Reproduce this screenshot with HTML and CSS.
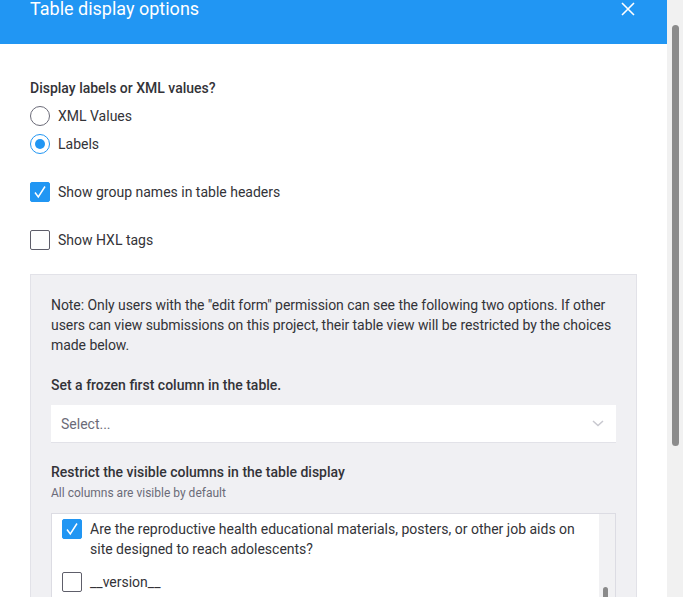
FILE: index.html
```html
<!DOCTYPE html>
<html lang="en">
<head>
<meta charset="utf-8">
<title>Table display options</title>
<link rel="stylesheet" href="styles.css">
</head>
<body>
<div class="page">
  <div class="modal">
    <header class="modal-header">
      <h1 class="modal-title">Table display options</h1>
      <button class="close" aria-label="Close">
        <svg width="14" height="14" viewBox="0 0 14 14"><path d="M1 1L13 13M13 1L1 13" stroke="#fff" stroke-width="1.6" fill="none"/></svg>
      </button>
    </header>
    <div class="modal-content">
      <div class="heading">Display labels or XML values?</div>
      <label class="row radio-row"><span class="radio"></span><span>XML Values</span></label>
      <label class="row radio-row"><span class="radio checked"></span><span>Labels</span></label>

      <label class="row check-row first-check"><span class="checkbox checked"><svg width="20" height="20" viewBox="0 0 20 20"><path d="M5 10.5L8.3 15L15 4.5" stroke="#fff" stroke-width="1.5" fill="none"/></svg></span><span>Show group names in table headers</span></label>
      <label class="row check-row"><span class="checkbox"></span><span>Show HXL tags</span></label>

      <div class="box">
        <p class="note">Note: Only users with the "edit form" permission can see the following two options. If other users can view submissions on this project, their table view will be restricted by the choices made below.</p>
        <div class="heading sub-heading">Set a frozen first column in the table.</div>
        <div class="select">
          <span class="placeholder">Select...</span>
          <svg width="12" height="7" viewBox="0 0 12 7"><path d="M1 1L6 5.5L11 1" stroke="#c8c8cf" stroke-width="1.5" fill="none"/></svg>
        </div>
        <div class="heading restrict-heading">Restrict the visible columns in the table display</div>
        <div class="hint">All columns are visible by default</div>
        <div class="list">
          <div class="list-items">
            <label class="list-item"><span class="checkbox checked"><svg width="20" height="20" viewBox="0 0 20 20"><path d="M5 10.5L8.3 15L15 4.5" stroke="#fff" stroke-width="1.5" fill="none"/></svg></span><span class="item-text">Are the reproductive health educational materials, posters, or other job aids on site designed to reach adolescents?</span></label>
            <label class="list-item"><span class="checkbox"></span><span class="item-text">__version__</span></label>
          </div>
          <div class="inner-scroll"><div class="inner-thumb"></div></div>
        </div>
      </div>
    </div>
  </div>
  <div class="page-scroll"><div class="page-thumb"></div></div>
</div>
</body>
</html>
```

FILE: styles.css
```css
* { box-sizing: border-box; }
html, body { margin: 0; padding: 0; }
body {
  font-family: Roboto, "Noto Sans", "Liberation Sans", sans-serif;
  color: #333338;
  font-size: 14px;
  background: #fff;
  overflow: hidden;
}
.page {
  display: flex;
  height: 597px;
  overflow: hidden;
}
.modal {
  flex: 1;
  background: #fff;
  min-width: 0;
}
.modal-header {
  height: 44px;
  background: #2196f3;
  display: flex;
  justify-content: space-between;
  align-items: flex-start;
  padding: 0 32px 0 30px;
}
.modal-title {
  margin: 0;
  font-size: 18px;
  line-height: 18px;
  font-weight: 400;
  color: #fff;
}
.close {
  border: 0;
  background: none;
  padding: 0;
  margin-top: 2px;
  width: 14px;
  height: 14px;
  display: block;
}
.close svg { display: block; }
.modal-content {
  padding: 34px 30px 0;
}
.heading {
  font-weight: 500;
  line-height: 20px;
  margin-bottom: 8px;
}
.row {
  display: flex;
  align-items: center;
  gap: 8px;
  line-height: 20px;
  height: 20px;
}
.radio-row { margin-bottom: 8px; }
.radio {
  width: 20px;
  height: 20px;
  border-radius: 50%;
  border: 1.5px solid #6b6b78;
  display: flex;
  align-items: center;
  justify-content: center;
  flex: none;
}
.radio.checked { border-color: #2196f3; }
.radio.checked::after {
  content: "";
  width: 10px;
  height: 10px;
  border-radius: 50%;
  background: #2196f3;
}
.first-check { margin-top: 28px; }
.check-row { margin-bottom: 28px; }
.check-row + .box { margin-top: -4px; }
.checkbox {
  width: 20px;
  height: 20px;
  border: 1px solid #5e5e6a;
  border-radius: 2px;
  flex: none;
  display: block;
}
.checkbox.checked {
  background: #2196f3;
  border-color: #2196f3;
}
.checkbox svg { display: block; margin: -1px; }
.box {
  background: #f0f0f3;
  border: 1px solid #e2e2e8;
  padding: 20px 20px 0;
  height: 400px;
}
.note {
  margin: 0 0 20px;
  line-height: 20px;
  letter-spacing: -0.06px;
}
.sub-heading { margin-bottom: 10px; }
.select {
  height: 38px;
  background: #fff;
  border-bottom: 1px solid #e2e2e8;
  display: flex;
  align-items: center;
  justify-content: space-between;
  padding: 0 12px 0 10px;
}
.placeholder { color: #6b6b78; }
.restrict-heading { margin-top: 19px; margin-bottom: 3px; }
.hint {
  font-size: 12px;
  line-height: 16px;
  color: #6b6b78;
  margin-bottom: 12px;
}
.list {
  background: #fff;
  border: 1px solid #dcdce3;
  display: flex;
  height: 200px;
}
.list-items {
  flex: 1;
  padding: 5px 10px 0;
  min-width: 0;
}
.list-item {
  display: flex;
  gap: 8px;
  line-height: 20px;
  margin-bottom: 13px;
}
.inner-scroll {
  width: 16px;
  background: #f1f1f3;
  flex: none;
  padding-top: 73px;
}
.inner-thumb {
  width: 5px;
  margin-left: 4px;
  height: 100px;
  background: #8a8a8a;
  border-radius: 3px;
}
.page-scroll {
  width: 16px;
  flex: none;
  background: #f1f1f1;
  padding-top: 25px;
}
.page-thumb {
  width: 7px;
  margin-left: 5px;
  height: 421px;
  background: #8c8c8c;
  border-radius: 4px;
}
```
